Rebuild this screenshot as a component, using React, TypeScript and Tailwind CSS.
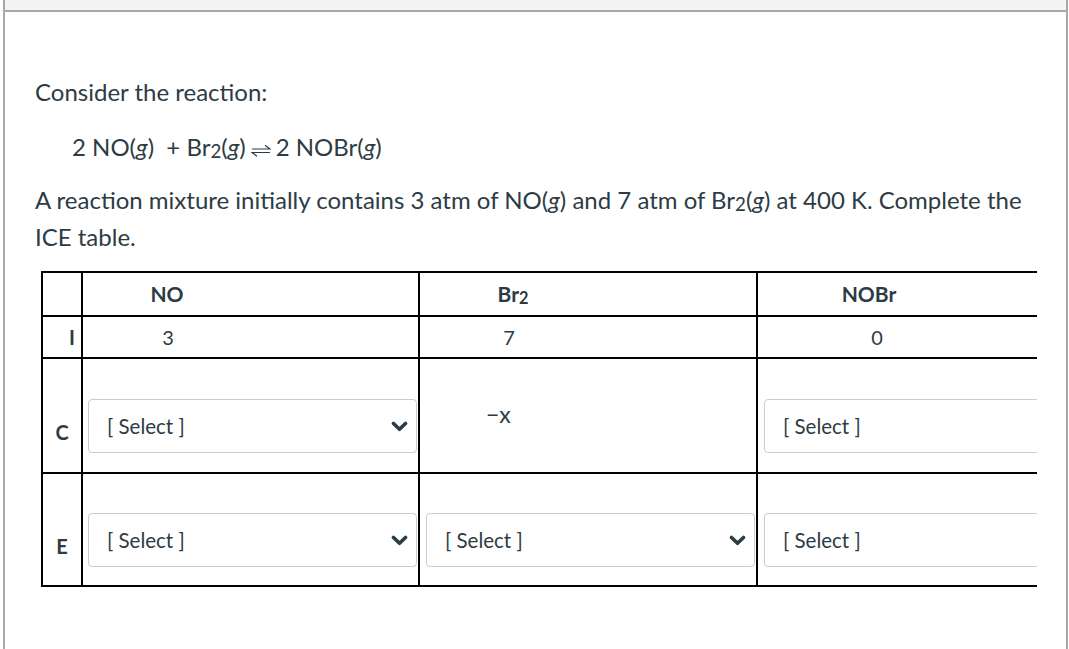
import React from "react";

const FONT = { fontFamily: "Lato, 'Noto Sans', sans-serif" };

function Chevron() {
  return (
    <svg className="h-[11px] w-[17px]" viewBox="0 0 17 11" fill="none">
      <path d="M2.5 2.5 L8.5 8.3 L14.5 2.5" stroke="#2d3b45" strokeWidth={3.6} strokeLinecap="round" strokeLinejoin="round" />
    </svg>
  );
}

function Equilibrium() {
  return (
    <svg className="mx-[5px] inline-block h-[13px] w-[20px] align-[-1px]" viewBox="0 0 20 13" fill="none">
      <path d="M1 5 H19 L14 1.2" stroke="#2d3b45" strokeWidth={1.1} />
      <path d="M19 8.5 H1 L6 12.3" stroke="#2d3b45" strokeWidth={1.1} />
    </svg>
  );
}

function Select({ arrow = true }: { arrow?: boolean }) {
  return (
    <div className="flex h-[54px] w-[329px] items-center justify-between rounded-[4px] border border-[#c7cdd1] bg-white pl-[18px] pr-[8px]">
      <span className="text-[20.5px] text-[#2d3b45]">[ Select ]</span>
      {arrow && <Chevron />}
    </div>
  );
}

function Sub({ children }: { children: React.ReactNode }) {
  return <sub className="relative bottom-[-2px] align-baseline text-[0.78em] leading-none">{children}</sub>;
}

export default function App() {
  return (
    <div className="h-[649px] w-[1069px] overflow-hidden bg-white text-[#2d3b45]" style={FONT}>
      <div className="ml-[3px] h-full w-[1065px] border-x-2 border-[#a8a8a8]">
        {/* top strip */}
        <div className="h-[12px] border-b-2 border-[#a8a8a8] bg-[#f4f4f4]" />

        <div className="pl-[30px] pr-[30px] pt-[61px] text-[24px]">
          <p className="leading-[37px]">Consider the reaction:</p>

          <p className="mt-[18px] pl-[37px] leading-[37px]">
            2 NO(<i>g</i>)&nbsp; + Br<Sub>2</Sub>(<i>g</i>)
            <Equilibrium />
            2 NOBr(<i>g</i>)
          </p>

          <p className="mt-[16px] leading-[37px]">
            A reaction mixture initially contains 3 atm of NO(<i>g</i>) and 7 atm of Br<Sub>2</Sub>(<i>g</i>) at 400 K. Complete the ICE table.
          </p>

          {/* ICE table */}
          <div className="ml-[6px] mt-[16px] w-[996px] overflow-hidden text-[20px]">
            <div className="w-[1060px] border-l-2 border-t-2 border-black">
              {/* header */}
              <div className="flex h-[44px] border-b-2 border-black text-[21px]">
                <div className="w-[40px] border-r-2 border-black" />
                <div className="flex w-[337px] items-center border-r-2 border-black">
                  <div className="w-[168px] text-center font-bold">NO</div>
                </div>
                <div className="flex w-[338px] items-center border-r-2 border-black">
                  <div className="w-[186px] text-center font-bold">
                    Br<Sub>2</Sub>
                  </div>
                </div>
                <div className="flex w-[340px] items-center">
                  <div className="w-[222px] text-center font-bold">NOBr</div>
                </div>
              </div>

              {/* I row */}
              <div className="flex h-[42px] border-b-2 border-black">
                <div className="flex w-[40px] items-center justify-end border-r-2 border-black pr-[6px] font-bold">I</div>
                <div className="flex w-[337px] items-center border-r-2 border-black">
                  <div className="w-[170px] text-center">3</div>
                </div>
                <div className="flex w-[338px] items-center border-r-2 border-black">
                  <div className="w-[178px] text-center">7</div>
                </div>
                <div className="flex w-[340px] items-center">
                  <div className="w-[238px] text-center">0</div>
                </div>
              </div>

              {/* C row */}
              <div className="flex h-[115px] border-b-2 border-black">
                <div className="w-[40px] border-r-2 border-black pt-[61px] text-center font-bold leading-[24px]">C</div>
                <div className="w-[337px] border-r-2 border-black pl-[5px] pt-[40px]">
                  <Select />
                </div>
                <div className="w-[338px] border-r-2 border-black pl-[66px] pt-[43px] text-[23px] leading-[24px]">−x</div>
                <div className="w-[340px] pl-[6px] pt-[40px]">
                  <Select />
                </div>
              </div>

              {/* E row */}
              <div className="flex h-[113px] border-b-2 border-black">
                <div className="w-[40px] border-r-2 border-black pt-[60px] text-center font-bold leading-[24px]">E</div>
                <div className="w-[337px] border-r-2 border-black pl-[5px] pt-[39px]">
                  <Select />
                </div>
                <div className="w-[338px] border-r-2 border-black pl-[6px] pt-[39px]">
                  <Select />
                </div>
                <div className="w-[340px] pl-[6px] pt-[39px]">
                  <Select />
                </div>
              </div>
            </div>
          </div>
        </div>
      </div>
    </div>
  );
}
